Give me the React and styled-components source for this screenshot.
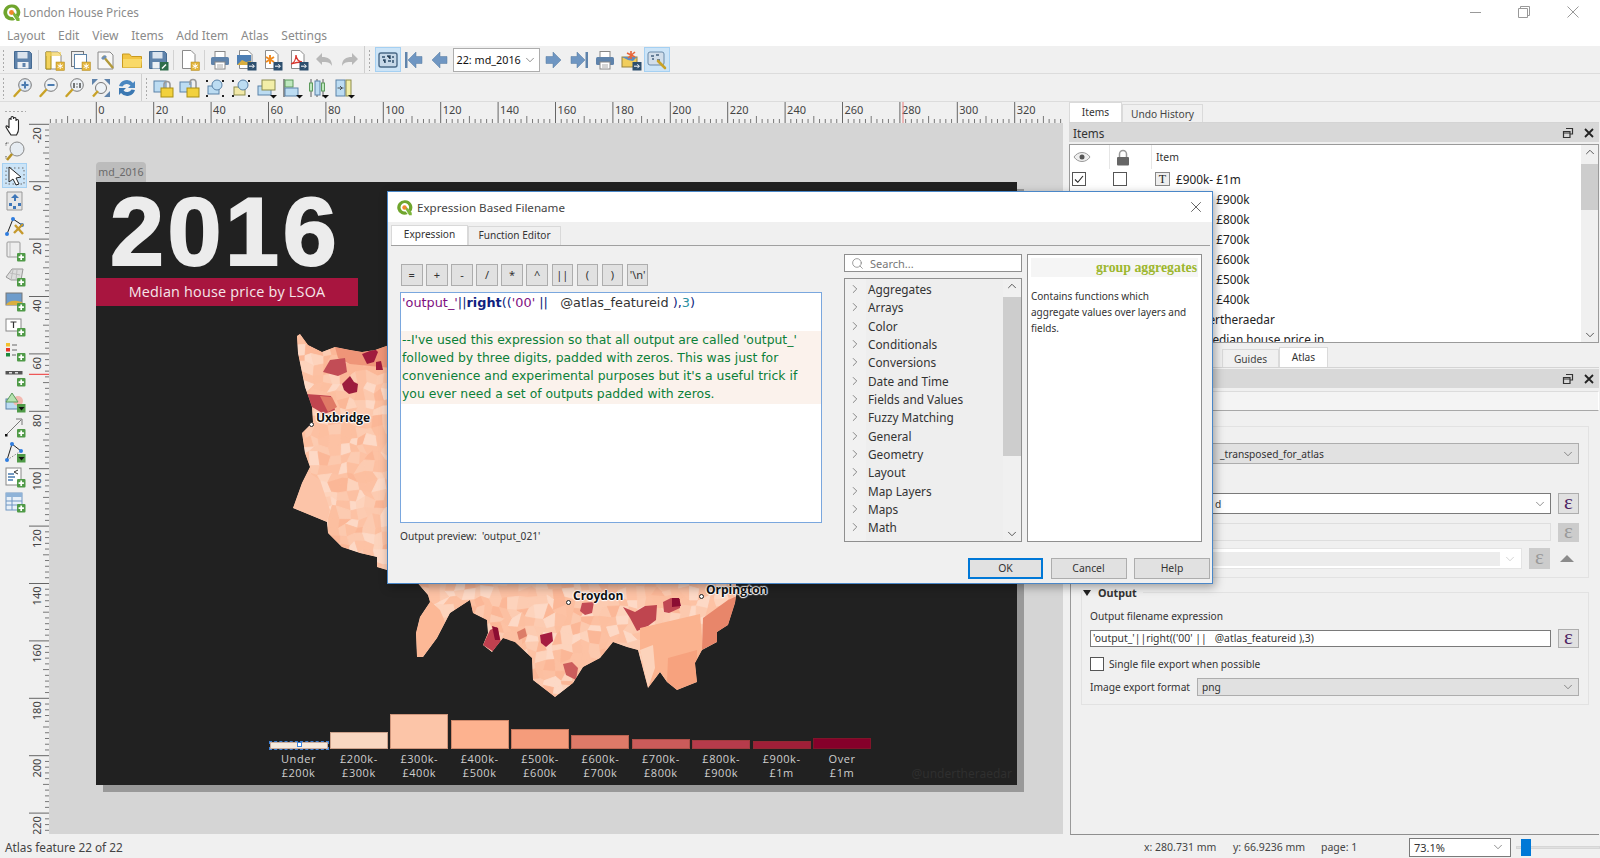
import React from 'react';
import styled, { createGlobalStyle } from 'styled-components';
import { ChevronDown, ChevronRight, ChevronUp, Search, X } from 'lucide-react';

const GlobalStyle = createGlobalStyle`
  html, body {
    margin: 0;
    width: 1600px;
    height: 858px;
    overflow: hidden;
    background: #f0f0f0;
  }
  * { box-sizing: border-box; }
`;

const Window = styled.div`
  position: relative;
  width: 1600px;
  height: 858px;
  display: flex;
  flex-direction: column;
  background: #f0f0f0;
  font-family: "Noto Sans", sans-serif;
  font-size: 12px;
  color: #222;
`;

/* title and menu */
const TitleBar = styled.div`
  height: 24px;
  background: #fff;
  display: flex;
  align-items: center;
  padding-left: 2px;
  gap: 2px;
  color: #8b8b8b;
  font-size: 11.7px;
`;
const WinControls = styled.div`
  margin-left: auto;
  margin-right: 3px;
  display: flex;
  svg { display: block; }
`;
const WinButton = styled.div`
  width: 48.5px;
  height: 24px;
  display: flex;
  align-items: center;
  justify-content: center;
`;
const MenuBar = styled.div`
  height: 22px;
  background: #fff;
  display: flex;
  align-items: center;
  gap: 12.8px;
  padding-left: 7px;
  color: #8a8a8a;
  font-size: 12px;
`;

/* toolbars */
const ToolRow = styled.div`
  height: 28px;
  display: flex;
  align-items: center;
  border-bottom: 1px solid #dcdcdc;
`;
const Handle = styled.div`
  width: ${p => p.$w || 9.5}px;
  height: 22px;
  flex: none;
  background-image: radial-gradient(#aaa 0.7px, transparent 0.9px);
  background-size: 3px 4px;
  background-position: 2px 0;
  background-repeat: repeat-y;
`;
const ToolBtn = styled.div`
  width: 26px;
  height: 25px;
  flex: none;
  display: flex;
  align-items: center;
  justify-content: center;
  background: ${p => (p.$active ? '#cce4f7' : 'transparent')};
  box-shadow: ${p => (p.$active ? 'inset 0 0 0 1px #a5d0f2' : 'none')};
  svg { display: block; }
`;
const Sep = styled.div`
  width: 5px;
  height: 20px;
  flex: none;
  display: flex;
  justify-content: center;
  &::before {
    content: "";
    width: 1px;
    background: #d2d2d2;
  }
`;
const GroupEnd = styled.div`
  width: 1px;
  height: 27px;
  margin: 0 1px;
  background: #cfcfcf;
  flex: none;
`;
const PageCombo = styled.div`
  width: 87px;
  height: 24px;
  flex: none;
  background: #fff;
  border: 1px solid #adadad;
  display: flex;
  align-items: center;
  padding-left: 3px;
  font-size: 10.8px;
  color: #111;
  justify-content: space-between;
  white-space: nowrap;
  svg { margin-right: 2px; flex: none; }
`;

/* main workspace */
const Main = styled.div`
  flex: 1;
  min-height: 0;
  display: flex;
`;
const SideTools = styled.div`
  width: 29px;
  flex: none;
  display: flex;
  flex-direction: column;
  align-items: center;
  padding-top: 8px;
`;
const SideBtn = styled(ToolBtn)`
  width: 25px;
  height: 25.1px;
`;
const SideGrip = styled.div`
  width: 22px;
  height: 3px;
  background-image: radial-gradient(#aaa 0.7px, transparent 0.9px);
  background-size: 4px 3px;
`;
const Designer = styled.div`
  width: 1034px;
  flex: none;
  display: flex;
  flex-direction: column;
  padding-bottom: 2px;
`;
const RulerH = styled.svg`
  display: block;
  flex: none;
  width: 1034px;
  height: 21px;
`;
const DesignerBody = styled.div`
  flex: 1;
  min-height: 0;
  display: flex;
`;
const RulerV = styled.svg`
  display: block;
  flex: none;
  width: 20px;
  height: 100%;
`;
const Canvas = styled.div`
  flex: 1;
  background: #d5d5d5;
  padding: 39px 0 0 47px;
  overflow: hidden;
`;
const PageTab = styled.div`
  width: 50px;
  height: 20px;
  background: #bcbcbc;
  border-radius: 4px 4px 0 0;
  color: #6a6a6a;
  font-size: 10.6px;
  line-height: 21px;
  text-align: center;
`;
const Page = styled.div`
  position: relative;
  width: 921px;
  height: 603px;
  background: #212121;
  box-shadow: 7px 7px 0 #999;
  display: flex;
  flex-direction: column;
  padding-bottom: 5px;
`;
const Year = styled.div`
  height: 96px;
  padding-left: 14px;
  font-family: "Liberation Sans", sans-serif;
  font-weight: 700;
  font-size: 97px;
  line-height: 100px;
  letter-spacing: 3.6px;
  color: #ececec;
  -webkit-text-stroke: 2px #ececec;
`;
const Banner = styled.div`
  width: 262px;
  height: 28px;
  background: #a8153f;
  color: #f6e6ea;
  font-size: 14.4px;
  line-height: 28px;
  text-align: center;
  letter-spacing: 0.2px;
  font-family: "Open Sans", sans-serif;
`;
const MapSvg = styled.svg`
  position: absolute;
  left: 0;
  top: 0;
  width: 921px;
  height: 603px;
`;
const MapLabel = styled.div`
  position: absolute;
  left: ${p => p.$x}px;
  top: ${p => p.$y}px;
  font-family: "Open Sans", sans-serif;
  font-weight: 700;
  font-size: 12px;
  line-height: 14px;
  color: #111;
  text-shadow: 0 0 2px #fff, 1px 0 1px #fff, -1px 0 1px #fff, 0 1px 1px #fff, 0 -1px 1px #fff;
`;
const Pin = styled.div`
  position: absolute;
  left: ${p => p.$x}px;
  top: ${p => p.$y}px;
  width: 5px;
  height: 5px;
  border-radius: 50%;
  background: #fff;
  border: 1px solid #222;
`;
const Watermark = styled.div`
  position: absolute;
  right: 5px;
  bottom: 3px;
  font-size: 12px;
  color: #2f2f2f;
`;
const Chart = styled.div`
  margin-top: auto;
  margin-left: 173.5px;
  display: flex;
  gap: 2.4px;
  position: relative;
`;
const ChartCol = styled.div`
  width: 58px;
  display: flex;
  flex-direction: column;
  align-items: stretch;
`;
const BarSlot = styled.div`
  height: 36px;
  display: flex;
  align-items: flex-end;
`;
const Bar = styled.div`
  width: 100%;
  position: relative;
  height: ${p => p.$h}px;
  background: ${p => p.$c};
  border: 1px solid rgba(120, 60, 40, 0.35);
  outline: ${p => (p.$selected ? '1px dashed #3f83d8' : 'none')};
  &::after {
    content: "";
    display: ${p => (p.$selected ? 'block' : 'none')};
    position: absolute;
    left: 50%;
    top: -1px;
    width: 3px;
    height: 3px;
    margin-left: -2px;
    background: #fff;
    border: 1px solid #3f83d8;
  }
`;
const BarLabel = styled.div`
  margin-top: 3px;
  text-align: center;
  color: #cfcfcf;
  font-family: "Open Sans", sans-serif;
  font-size: 11px;
  line-height: 14px;
  letter-spacing: 0.55px;
  white-space: pre-line;
`;

/* right dock */
const Dock = styled.div`
  flex: 1;
  min-width: 0;
  padding: 0 1px 1px 6px;
  display: flex;
  flex-direction: column;
`;
const DockTabs = styled.div`
  height: 21px;
  flex: none;
  display: flex;
  align-items: flex-end;
  padding-left: ${p => p.$indent || 0}px;
  border-bottom: 1px solid #d4d4d4;
  margin-top: ${p => p.$top || 0}px;
`;
const DockTab = styled.div`
  width: ${p => p.$w}px;
  height: ${p => (p.$active ? 20 : 18)}px;
  background: ${p => (p.$active ? '#fff' : '#f0f0f0')};
  border: 1px solid #dadada;
  border-bottom: none;
  font-size: 10.2px;
  line-height: 18px;
  text-align: center;
  color: ${p => (p.$active ? '#333' : '#444')};
`;
const DockHeader = styled.div`
  height: 19px;
  flex: none;
  margin-top: ${p => p.$top || 0}px;
  background: #d8d8d8;
  display: flex;
  align-items: center;
  padding: 0 4px;
  color: #333;
  font-size: 11.7px;
  gap: 9px;
  svg { display: block; }
`;
const HeaderTitle = styled.div`
  flex: 1;
`;
const ItemTree = styled.div`
  height: 199px;
  flex: none;
  margin-top: 2px;
  background: #fff;
  border: 1px solid #9a9a9a;
  display: flex;
  overflow: hidden;
`;
const ItemList = styled.div`
  flex: 1;
  min-width: 0;
`;
const ItemHead = styled.div`
  height: 24px;
  display: grid;
  grid-template-columns: 40px 42px 1fr;
`;
const HeadCell = styled.div`
  border-right: ${p => (p.$last ? 'none' : '1px solid #e6e6e6')};
  display: flex;
  align-items: center;
  padding-left: ${p => p.$pad || 0}px;
  font-size: 10.4px;
  color: #333;
`;
const ItemRow = styled.div`
  height: 20px;
  display: grid;
  grid-template-columns: 40px 42px 1fr;
  align-items: center;
`;
const CheckBox = styled.div`
  width: 14px;
  height: 14px;
  border: 1px solid #555;
  background: #fff;
  margin-left: ${p => p.$left || 0}px;
  flex: none;
  display: flex;
  align-items: center;
  justify-content: center;
`;
const ItemName = styled.div`
  display: flex;
  align-items: center;
  padding-left: 3px;
  gap: 6px;
  font-size: 11.8px;
  color: #222;
  white-space: nowrap;
`;
const TypeIcon = styled.div`
  width: 15px;
  height: 14px;
  border: 1px solid #888;
  background: #eee;
  font-family: "Liberation Serif", serif;
  font-size: 12px;
  line-height: 12px;
  text-align: center;
`;
const ScrollBar = styled.div`
  width: ${p => p.$w}px;
  flex: none;
  background: #f0f0f0;
  display: flex;
  flex-direction: column;
  align-items: center;
  justify-content: space-between;
  position: relative;
  color: #444;
  svg { display: block; }
`;
const Thumb = styled.div`
  position: absolute;
  left: 0;
  right: 0;
  top: ${p => p.$top}px;
  height: ${p => p.$h}px;
  background: #cdcdcd;
`;
const Strip = styled.div`
  height: 20px;
  flex: none;
  margin-top: 3px;
  background: #f4f4f4;
  border: 1px solid #dcdcdc;
  border-bottom: 1px solid #a8a8a8;
  border-right-color: #fff;
`;
const AtlasBody = styled.div`
  flex: 1;
  min-height: 0;
  border-left: 1px solid #9a9a9a;
  border-bottom: 1px solid #8f8f8f;
  margin-left: 1px;
  padding: 15px 10px 0 10px;
`;
const GroupBox = styled.div`
  border: 1px solid #e2e2e2;
  height: ${p => p.$h}px;
  padding: ${p => p.$pad};
  display: flex;
  flex-direction: column;
  position: relative;
`;
const OutputTitle = styled.div`
  position: absolute;
  left: 0;
  top: -8px;
  background: #f0f0f0;
  display: flex;
  align-items: center;
  gap: 7px;
  padding-right: 6px;
  font-weight: 700;
  font-size: 10.8px;
  line-height: 15px;
  color: #333;
`;
const Caret = styled.div`
  width: 0;
  height: 0;
  margin-left: 1px;
  border-left: 4.5px solid transparent;
  border-right: 4.5px solid transparent;
  border-top: 6px solid #222;
`;
const FormRow = styled.div`
  display: flex;
  align-items: center;
  gap: ${p => p.$gap || 7}px;
  margin-top: ${p => p.$top || 0}px;
  height: ${p => p.$h}px;
`;
const Combo = styled.div`
  flex: 1;
  height: 100%;
  display: flex;
  align-items: center;
  justify-content: space-between;
  padding: 0 3px 0 ${p => p.$pad || 4}px;
  background: ${p => (p.$white ? '#fff' : '#e1e1e1')};
  border: 1px solid ${p => (p.$white ? '#7a7a7a' : '#adadad')};
  font-size: 10.2px;
  color: #333;
  white-space: nowrap;
`;
const DisabledInput = styled.div`
  flex: 1;
  height: 100%;
  background: #f0f0f0;
  border: 1px solid #dedede;
`;
const DisabledCombo = styled.div`
  flex: 1;
  height: 100%;
  display: flex;
  justify-content: flex-end;
  background: #fff;
  border: 1px solid #e4e4e4;
  padding: 3px 1px 2px 0;
  div {
    flex: 1;
    background: #ececec;
  }
  svg { margin: 0 3px; }
`;
const EpsButton = styled.div`
  width: 21px;
  height: ${p => p.$h || 21}px;
  flex: none;
  background: ${p => (p.$off ? '#ccc' : '#e1e1e1')};
  border: 1px solid ${p => (p.$off ? '#ccc' : '#adadad')};
  color: ${p => (p.$off ? '#999' : '#4d1f63')};
  font-family: "Liberation Serif", serif;
  font-size: 21px;
  line-height: ${p => (p.$h || 21) - 5}px;
  text-align: center;
`;
const UpTriangle = styled.div`
  width: 0;
  height: 0;
  margin: 0 5px 0 3px;
  border-left: 7px solid transparent;
  border-right: 7px solid transparent;
  border-bottom: 7px solid #8b8b8b;
`;
const FieldLabel = styled.div`
  font-size: 10.2px;
  line-height: 16px;
  color: #333;
  white-space: nowrap;
`;
const TextInput = styled.div`
  flex: 1;
  height: 17px;
  background: #fff;
  border: 1px solid #7a7a7a;
  padding-left: 2px;
  font-size: 10.4px;
  line-height: 15px;
  color: #333;
  white-space: pre;
`;
const GroupGap = styled.div`
  height: 14px;
  flex: none;
`;

/* status bar */
const StatusBar = styled.div`
  height: 22px;
  display: flex;
  align-items: center;
  padding-left: 5px;
  color: #333;
`;
const StatusText = styled.div`
  width: ${p => p.$w}px;
  flex: none;
  color: #444;
  font-size: ${p => p.$size || 10.5}px;
  white-space: nowrap;
`;
const ZoomCombo = styled.div`
  width: 102px;
  height: 19px;
  background: #fff;
  border: 1px solid #7a7a7a;
  display: flex;
  align-items: center;
  justify-content: space-between;
  padding: 0 5px 0 4px;
  font-size: 11px;
`;
const SliderTrack = styled.div`
  flex: 1;
  margin-left: 5px;
  height: 3px;
  position: relative;
  background: #e0e0e0;
  border: 1px solid #d6d6d6;
`;
const SliderHandle = styled.div`
  position: absolute;
  left: 4px;
  top: -8px;
  width: 10px;
  height: 17px;
  background: #0078d7;
`;

/* dialog */
const Dialog = styled.div`
  position: absolute;
  left: 387px;
  top: 191px;
  width: 826px;
  height: 393px;
  background: #f0f0f0;
  border: 1px solid #4a87c8;
  box-shadow: 2px 3px 9px rgba(0, 0, 0, 0.35);
  display: flex;
  flex-direction: column;
`;
const DialogTitle = styled.div`
  height: 30px;
  flex: none;
  background: #fff;
  display: flex;
  align-items: center;
  padding: 0 7px 0 8px;
  gap: 4px;
  font-size: 11.6px;
  color: #444;
`;
const DialogClose = styled.div`
  margin-left: auto;
  color: #333;
  svg { display: block; }
`;
const DialogTabs = styled.div`
  height: 21px;
  flex: none;
  margin: 3px 2px 0 3px;
  display: flex;
  align-items: flex-end;
  border-bottom: 1px solid #a0a0a0;
`;
const DialogTab = styled.div`
  width: ${p => p.$w}px;
  height: ${p => (p.$active ? 20 : 19)}px;
  background: ${p => (p.$active ? '#fff' : '#f0f0f0')};
  border: 1px solid #d9d9d9;
  border-bottom: none;
  font-size: 10.1px;
  line-height: 17px;
  text-align: center;
  color: #333;
`;
const DialogBody = styled.div`
  flex: none;
  margin-top: 8px;
  padding-left: 12px;
  display: flex;
  height: 288px;
`;
const EditorCol = styled.div`
  width: 422px;
  flex: none;
  margin-right: 22px;
  padding-top: 10px;
`;
const OpButtons = styled.div`
  display: flex;
  gap: 3.6px;
  padding-left: 1px;
  margin-bottom: 6px;
`;
const OpButton = styled.div`
  width: 21.5px;
  height: 22px;
  flex: none;
  background: #e1e1e1;
  border: 1px solid #adadad;
  text-align: center;
  font-size: 11px;
  line-height: 19px;
  color: #333;
`;
const Editor = styled.div`
  height: 231px;
  background: #fff;
  border: 1px solid #7aa7de;
  padding-top: 1px;
  font-family: "DejaVu Sans", sans-serif;
  font-size: 12.4px;
  line-height: 18.3px;
  white-space: pre;
`;
const CodeLine = styled.div`
  padding-left: 1px;
  height: 18.3px;
  font-size: ${p => p.$size || 12.4}px;
  background: ${p => (p.$comment ? '#fbf2ec' : 'transparent')};
  color: ${p => (p.$comment ? '#0b7f38' : '#333')};
`;
const Str = styled.span`
  color: #7f0f7f;
`;
const Fn = styled.span`
  color: #101f80;
  font-weight: 700;
`;
const Op = styled.span`
  color: #101f80;
`;
const Num = styled.span`
  color: #2a8f9f;
`;
const Preview = styled.div`
  margin-top: 6px;
  font-size: 10.2px;
  color: #333;
  white-space: pre;
`;
const MiddleCol = styled.div`
  width: 178px;
  flex: none;
  margin-right: 5px;
  display: flex;
  flex-direction: column;
  gap: 6px;
`;
const SearchBox = styled.div`
  height: 18px;
  flex: none;
  background: #fff;
  border: 1px solid #8f8f8f;
  display: flex;
  align-items: center;
  padding-left: 6px;
  gap: 6px;
  font-size: 11px;
  color: #777;
  svg { display: block; }
`;
const FuncTree = styled.div`
  flex: 1;
  min-height: 0;
  border: 1px solid #8f8f8f;
  display: flex;
  overflow: hidden;
`;
const FuncList = styled.div`
  flex: 1;
  background: #eeeeee;
  padding-top: 1px;
  background-image: linear-gradient(#f1f1f1, #f1f1f1);
  background-size: 21px 100%;
  background-repeat: no-repeat;
`;
const FuncRow = styled.div`
  height: 18.33px;
  display: flex;
  align-items: center;
  padding-left: 3px;
  gap: 6px;
  font-size: 11.8px;
  color: #333;
  svg { display: block; color: #777; flex: none; }
`;
const HelpBox = styled.div`
  width: 175px;
  flex: none;
  background: #fff;
  border: 1px solid #8f8f8f;
  padding: 3px;
`;
const HelpHead = styled.div`
  height: 19px;
  background: #f5f5f5;
  text-align: right;
  color: #9db72e;
  font-family: "Liberation Serif", serif;
  font-weight: 700;
  font-size: 13.8px;
  line-height: 20px;
  padding-right: 1px;
`;
const HelpText = styled.div`
  margin-top: 11px;
  font-size: 10px;
  line-height: 16px;
  color: #333;
`;
const DialogFooter = styled.div`
  margin-top: 16px;
  padding-right: 2px;
  display: flex;
  justify-content: flex-end;
  gap: 7.5px;
`;
const DlgButton = styled.div`
  width: ${p => p.$w}px;
  height: 21px;
  background: #e1e1e1;
  border: ${p => (p.$primary ? '2px solid #0078d7' : '1px solid #adadad')};
  text-align: center;
  font-size: 10.4px;
  line-height: ${p => (p.$primary ? 17 : 19)}px;
  color: #333;
`;

/* icon drawings */
const plusBadge = (
  <g>
    <rect x="13" y="13" width="8.5" height="8.5" rx="1" fill="#4f9a47" />
    <path d="M17.2 14.6v5.3M14.6 17.2h5.3" stroke="#fff" strokeWidth="1.7" />
  </g>
);
const menuBadge = (
  <g>
    <rect x="13" y="13" width="8.5" height="8.5" fill="#4f9a47" />
    <path d="M14.5 16h6l-3 3.5z" fill="#111" />
  </g>
);
const starBadge = (
  <g>
    <rect x="13" y="13" width="8.5" height="8.5" fill="#e2b43a" stroke="#b08820" strokeWidth="0.5" />
    <path d="M17.2 14.4v5.6M14.6 15.8l5.2 2.8M19.8 15.8l-5.2 2.8" stroke="#fff" strokeWidth="1" />
  </g>
);
const exportBadge = (
  <g>
    <rect x="12.5" y="13" width="9" height="8.5" fill="#2d4f6e" />
    <path d="M14 17.2h5M17.4 15.2l2 2-2 2" stroke="#fff" strokeWidth="1" fill="none" />
  </g>
);
const dropCaret = <path d="M14 18h7l-3.5 3.5z" fill="#111" />;
const doc = <path d="M4.5 1.5h8.5l4 4v14h-12.5z" fill="#fff" stroke="#8a8a8a" />;
const magHandle = <path d="M8 13l-5.5 6" stroke="#c9a227" strokeWidth="2.4" strokeLinecap="round" />;
const lockBody = <rect x="9" y="11" width="12" height="9" fill="#f2d13c" stroke="#a98e14" />;
const corners = <path d="M2 3h2v2H2zM18 3h2v2h-2zM2 18h2v2H2zM18 18h2v2h-2z" fill="#222" />;
const blueSq = (x, y, w, h) => <rect x={x} y={y} width={w} height={h} fill="#bcdcf2" stroke="#5a82a8" />;

const ICONS = {
  save: <><path d="M2.5 2.5h15l2 2v15h-17z" fill="#5f83ab" stroke="#456a92" /><rect x="5.5" y="3" width="10" height="6.5" fill="#dbe4ee" /><rect x="5.5" y="13" width="11" height="6.5" fill="#eef1f5" /><rect x="10.5" y="14" width="3" height="4" fill="#5f83ab" /></>,
  saveAs: <><path d="M2.5 2.5h15l2 2v15h-17z" fill="#5f83ab" stroke="#456a92" /><rect x="5.5" y="3" width="10" height="6.5" fill="#dbe4ee" /><rect x="5.5" y="13" width="7" height="6.5" fill="#eef1f5" /><rect x="13" y="13" width="8.5" height="8.5" fill="#2f6d4a" /><path d="M15 19.5l4-4" stroke="#fff" strokeWidth="1.4" /></>,
  newLayout: <><path d="M3 3h12l3 3v14H3z" fill="#fff" stroke="#8a8a8a" /><path d="M3 3h5v17H3z" fill="#f2d25c" stroke="#a98e14" /><path d="M3 3h15v4H3z" fill="#f2d25c" opacity="0.7" />{starBadge}</>,
  dupLayout: <><rect x="2.5" y="2.5" width="12" height="15" fill="#eee" stroke="#777" /><rect x="5.5" y="5.5" width="12" height="14" fill="#fff" stroke="#5a82a8" />{starBadge}</>,
  layoutMgr: <><path d="M3 3h12l3 3v14H3z" fill="#f7f7f7" stroke="#8a8a8a" /><path d="M8 7l10 12" stroke="#b39a3a" strokeWidth="2.4" /><path d="M6 9l4-3 2 2-4 3z" fill="#6f90b5" /></>,
  open: <><path d="M1.5 5h7l2 2.5h10v11h-19z" fill="#f3c544" stroke="#c99a1e" /><path d="M2 10h19l-1 8.5H2z" fill="#f9d968" /></>,
  newDoc: <>{doc}{starBadge}</>,
  print: <><rect x="6" y="2.5" width="10" height="6" fill="#fff" stroke="#888" /><rect x="2" y="8" width="18" height="8" rx="1.5" fill="#5f83ab" /><rect x="6" y="13" width="10" height="7" fill="#fff" stroke="#888" /><path d="M8 16h6M8 18h6" stroke="#aaa" /></>,
  exportImg: <>{doc}<rect x="2" y="6" width="14" height="10" fill="#4d7fb5" /><path d="M2 16l5-5 4 2 5-1v4z" fill="#d9ae3f" />{exportBadge}</>,
  exportSvg: <>{doc}<path d="M9 6v9M5 8l8 5M13 8l-8 5" stroke="#f08a1e" strokeWidth="2" />{exportBadge}</>,
  exportPdf: <>{doc}<path d="M4 15c3-1 5-5 5-9 0 4 3 7 6 7-3 0-8 1-11 2z" fill="none" stroke="#d8342c" strokeWidth="1.3" />{exportBadge}</>,
  undo: <path d="M3 10l6-6v4c6 0 10 2 10 9-2-4-5-4-10-4v3z" fill="#b8b8b8" />,
  redo: <path d="M19 10l-6-6v4c-6 0-10 2-10 9 2-4 5-4 10-4v3z" fill="#b8b8b8" />,
  atlasPreview: <><rect x="2" y="4" width="18" height="14" rx="2" fill="#c6d8e8" stroke="#4a6a88" strokeWidth="1.4" /><path d="M5 8h3M10 7h3v3M15 8h2M6 11h2v3M11 12h3M16 11v3" stroke="#31506e" strokeWidth="1.5" /></>,
  first: <><rect x="2" y="3" width="2.5" height="16" fill="#5f83ab" /><path d="M5 11l8-8v4.5h6v7h-6V19z" fill="#6f96c2" stroke="#54789f" strokeWidth="0.5" /></>,
  prev: <path d="M3 11l8-8v4.5h7v7h-7V19z" fill="#6f96c2" stroke="#54789f" strokeWidth="0.5" />,
  next: <path d="M19 11l-8-8v4.5H4v7h7V19z" fill="#6f96c2" stroke="#54789f" strokeWidth="0.5" />,
  last: <><rect x="17.5" y="3" width="2.5" height="16" fill="#5f83ab" /><path d="M17 11l-8-8v4.5H3v7h6V19z" fill="#6f96c2" stroke="#54789f" strokeWidth="0.5" /></>,
  atlasExport: <><rect x="2" y="8" width="15" height="10" fill="#f1cd5c" stroke="#99813a" /><path d="M2 8h15l-4 4-5-1z" fill="#5d8ec0" /><path d="M11 2v8M7 4l8 4M15 3l-7 6" stroke="#e8663a" strokeWidth="1.6" />{exportBadge}</>,
  atlasSettings: <><rect x="2" y="3" width="16" height="13" rx="2" fill="#d2deea" stroke="#6a8aa8" /><path d="M5 7h3M10 6h3M6 10h2M11 11h3" stroke="#45627f" strokeWidth="1.4" /><path d="M12 12l7 7" stroke="#c9a227" strokeWidth="2.6" strokeLinecap="round" /></>,
  zoomIn: <><circle cx="13" cy="8" r="6.3" fill="#dfe9f3" stroke="#777" /><path d="M13 4.5v7M9.5 8h7" stroke="#4a7bb0" strokeWidth="2" />{magHandle}</>,
  zoomOut: <><circle cx="13" cy="8" r="6.3" fill="#eef2f6" stroke="#777" /><path d="M9.5 8h7" stroke="#4a7bb0" strokeWidth="2" />{magHandle}</>,
  zoomOne: <><circle cx="13" cy="8" r="6.3" fill="#eef2f6" stroke="#777" /><path d="M10 6v5M13 6.5v1M13 9.5v1M16 6v5" stroke="#333" strokeWidth="1.3" />{magHandle}</>,
  zoomFull: <><circle cx="11" cy="11" r="5.5" fill="#eef2f6" stroke="#777" /><path d="M2 8V2h6zM20 8V2h-6zM20 14v6h-6z" fill="#5f83ab" /><path d="M8 14l-5 5.5" stroke="#c9a227" strokeWidth="2.4" /></>,
  refresh: <><path d="M3 9a8 8 0 0 1 14-3l2-2v7h-7l2.5-2.5a5 5 0 0 0-8 1z" fill="#4a87c0" /><path d="M19 13a8 8 0 0 1-14 3l-2 2v-7h7l-2.5 2.5a5 5 0 0 0 8-1z" fill="#3b78b2" /></>,
  lock: <>{blueSq(2, 4, 12, 11)}<path d="M12 11V7.5a3 3 0 0 1 6 0V11" fill="none" stroke="#999" strokeWidth="1.6" />{lockBody}</>,
  unlock: <>{blueSq(2, 5, 11, 10)}<path d="M12 8V5.5a3 3 0 0 1 6 0V11" fill="none" stroke="#999" strokeWidth="1.6" />{lockBody}</>,
  group: <>{blueSq(4, 9, 11, 8)}<circle cx="13" cy="8" r="5" fill="#bcdcf2" stroke="#5a82a8" />{corners}</>,
  ungroup: <><rect x="4" y="10" width="11" height="8" fill="#f2e9a8" stroke="#8c8c4c" /><circle cx="13" cy="8" r="5" fill="#bcdcf2" stroke="#5a82a8" />{corners}</>,
  raise: <>{blueSq(2, 9, 13, 9)}<rect x="6" y="3" width="13" height="10" fill="#f2eea8" stroke="#8c8c4c" />{dropCaret}</>,
  align: <><path d="M2 2v18" stroke="#333" /><rect x="3" y="3" width="8" height="7" fill="#bfe8bf" stroke="#5c9a5c" />{blueSq(3, 11, 13, 8)}{dropCaret}</>,
  distribute: <><path d="M3 2v18M9 2v18M15 2v18" stroke="#333" strokeWidth="0.8" /><rect x="1.5" y="6" width="3" height="8" fill="#bfe8bf" stroke="#5c9a5c" />{blueSq(7, 4, 5, 14)}<rect x="13.5" y="6" width="3" height="8" fill="#bfe8bf" stroke="#5c9a5c" />{dropCaret}</>,
  resize: <>{blueSq(2, 3, 9, 16)}<rect x="12" y="3" width="5" height="16" fill="#f2eea8" stroke="#8c8c4c" /><path d="M3.5 11h6M6 9l2 2-2 2" stroke="#333" fill="none" strokeWidth="0.8" />{dropCaret}</>,
  hand: <path d="M7 20c-2-3-4-6-5-8 0-2 2-1 3 1V5c0-2 2-2 2 0V3c0-2 2.5-2 2.5 0v1c0-2 2.5-2 2.5 0v2c0-2 2.5-2 2.5 0v8c0 3-1 4-2 6z" fill="#fff" stroke="#222" strokeWidth="1.1" />,
  zoomTool: <><circle cx="13" cy="9" r="7" fill="#e6ecf2" stroke="#888" /><path d="M2 3h3M2 3v3M2 16v3" stroke="#555" strokeDasharray="1.5 1" /><path d="M8 14l-5 6" stroke="#b59123" strokeWidth="2.6" /></>,
  select: <><path d="M2 3h18v16H2z" fill="none" stroke="#6a6a6a" strokeDasharray="1.5 2.5" /><path d="M5 2l0 15 4-3 3 6 3-1-3-6 5-1z" fill="#fff" stroke="#222" /></>,
  moveContent: <><path d="M3 2h15v18H3z" fill="#e6e6e6" stroke="#999" /><path d="M11 4l4 4h-3v3h-2V8H7z" fill="#3f77b8" /><path d="M5 13h3v3H5zM14 13h3v3h-3zM9 16h3v3H9z" fill="#3f77b8" /></>,
  editNodes: <><path d="M3 19L9 4l9 6" fill="none" stroke="#222" /><circle cx="3" cy="19" r="2" fill="#2f7de0" /><circle cx="9" cy="4" r="2" fill="#2f7de0" /><circle cx="18" cy="10" r="2" fill="#2f7de0" /><path d="M10 18l9-9M11 10l8 9" stroke="#c69a2e" strokeWidth="2.4" /></>,
  addMap: <><rect x="3" y="2" width="13" height="15" rx="1" fill="#eee" stroke="#999" /><path d="M6 2v15" stroke="#bbb" />{plusBadge}</>,
  add3d: <><path d="M2 12l6-8h11l-2 11H7z" fill="#ddd" stroke="#999" /><path d="M6 8l10 2M9 5l-2 10M13 5l-1 10" stroke="#bbb" />{plusBadge}</>,
  addPicture: <><rect x="2" y="3" width="16" height="12" fill="#6e9ccb" stroke="#777" /><path d="M2 15c3-5 8-5 16-3v3z" fill="#d9ae3f" />{plusBadge}</>,
  addLabel: <><rect x="2" y="4" width="15" height="12" fill="#fff" stroke="#888" /><path d="M6.5 7h6M9.5 7v6" stroke="#333" strokeWidth="1.2" />{plusBadge}</>,
  addLegend: <><rect x="2" y="3" width="4" height="3.5" fill="#f2c12e" /><rect x="2" y="8" width="4" height="3.5" fill="#e8352b" /><rect x="2" y="13" width="4" height="3.5" fill="#1d8a3d" /><path d="M8 5h5M8 10h5M8 15h4" stroke="#666" strokeWidth="1.2" />{plusBadge}</>,
  addScale: <><rect x="1.5" y="6" width="17" height="3.5" fill="#555" /><path d="M5 7.7h3M11 7.7h3" stroke="#ddd" strokeWidth="1.4" />{plusBadge}</>,
  addShape: <><rect x="2" y="8" width="12" height="10" fill="#bcdcf2" stroke="#5a82a8" /><circle cx="14" cy="10" r="5" fill="#f3b9b0" /><path d="M8 2l6 9H2z" fill="#b6e3b0" stroke="#5c9a5c" />{menuBadge}</>,
  addArrow: <><path d="M2 19L17 4" stroke="#777" /><path d="M12 3h6v6" fill="none" stroke="#777" /><rect x="1" y="18" width="2.5" height="2.5" fill="#111" />{plusBadge}</>,
  addNodes: <><path d="M3 19L8 3l9 7" fill="none" stroke="#222" /><path d="M3 19l14-9" stroke="#888" strokeDasharray="1.5 1.5" /><circle cx="3" cy="19" r="2" fill="#2f7de0" /><circle cx="8" cy="3" r="2" fill="#2f7de0" /><circle cx="17" cy="10" r="2" fill="#2f7de0" />{menuBadge}</>,
  addHtml: <><rect x="2" y="2" width="15" height="17" fill="#fff" stroke="#888" /><path d="M4 8h6M4 11h7M4 14h5" stroke="#4a7bb0" strokeWidth="1.3" /><path d="M10 6l4-2M10 6l4 2" stroke="#333" />{plusBadge}</>,
  addTable: <><rect x="2" y="2" width="16" height="17" fill="#e8f0f8" stroke="#6f96c2" /><rect x="2" y="2" width="16" height="4" fill="#8fb3d8" /><path d="M2 10h16M2 14h16M8 6v13" stroke="#6f96c2" />{plusBadge}</>,
};

const Icon = ({ name, size = 22 }) => (
  <svg width={size} height={size} viewBox="0 0 22 22">{ICONS[name]}</svg>
);

const QLogo = ({ size }) => (
  <svg width={size} height={size} viewBox="0 0 20 20">
    <path d="M10 1.5a8.5 8.5 0 1 0 3.8 16.1l-2.6-2.9a5 5 0 1 1 3.4-2.3l2.7 2.9A8.5 8.5 0 0 0 10 1.5z" fill="#6fa52d" />
    <path d="M9.5 9.5h3l6 6.8V19h-3z" fill="#7cb53a" />
    <circle cx="10" cy="10" r="2.6" fill="#ee8a2b" />
  </svg>
);

const ToolItems = ({ names, Btn = ToolBtn, activeSet = [] }) =>
  names.map(n => (
    <Btn key={n} $active={activeSet.includes(n)}><Icon name={n} /></Btn>
  ));

/* rulers */
const MM = 2.87;
const X0 = 96.3;
const Y0 = 181.7;

const HorizontalRuler = () => {
  const ticks = [];
  for (let mm = -16; mm <= 336; mm += 2) {
    const x = X0 + mm * MM;
    if (x < 49 || x > 1063) continue;
    const major = mm % 20 === 0;
    const mid = mm % 10 === 0;
    ticks.push(
      <line key={mm} x1={x} x2={x} y1={major ? 102 : mid ? 116 : 119} y2={123} stroke={major ? '#666' : '#777'} strokeWidth="1" />
    );
    if (major && mm >= 0) {
      ticks.push(
        <text key={`l${mm}`} x={x + 2} y={114} fontSize="11" fill="#444" fontFamily="Noto Sans, sans-serif">{mm}</text>
      );
    }
  }
  return (
    <RulerH viewBox="29 102 1034 21">
      {ticks}
      <line x1={903} x2={903} y1={102} y2={123} stroke="#ea7a7a" />
    </RulerH>
  );
};

const VerticalRuler = () => {
  const ticks = [];
  for (let mm = -20; mm <= 226; mm += 2) {
    const y = Y0 + mm * MM;
    if (y > 835) continue;
    const major = mm % 20 === 0;
    const mid = mm % 10 === 0;
    ticks.push(
      <line key={mm} y1={y} y2={y} x1={major ? 29 : mid ? 43 : 45} x2={49} stroke={major ? '#666' : '#777'} strokeWidth="1" />
    );
    if (major) {
      ticks.push(
        <text key={`l${mm}`} x={41} y={y + 3} fontSize="11" fill="#444" fontFamily="Noto Sans, sans-serif" textAnchor="end" transform={`rotate(-90 41 ${y + 3})`}>{mm}</text>
      );
    }
  }
  return (
    <RulerV viewBox="29 123 20 711" preserveAspectRatio="xMinYMin slice">
      {ticks}
      <line x1={29} x2={49} y1={374.3} y2={374.3} stroke="#e33" />
    </RulerV>
  );
};

/* choropleth map: irregular grid cells clipped to the borough outlines */
const WEST = 'M297 336L300 334L308 345L322 352L335 347L350 350L362 352L375 350L392 344L392 572L387 570L377 567L377 557L360 553L342 547L328 533L327 522L293 508L302 483L310 467L305 453L302 433L313 422L312 407L305 387L298 353Z';
const SOUTH = 'M415 580L428 595L430 602L420 617L416 633L417 657L423 657L437 638L450 613L470 600L473 613L487 620L488 633L483 645L492 652L503 638L515 642L532 658L533 680L555 697L573 683L583 667L600 658L613 642L627 647L638 650L648 688L660 672L667 682L677 690L697 682L695 663L702 650L717 642L717 632L728 625L735 603L737 590L735 580Z';

const makeCells = () => {
  let seed = 71;
  const rnd = () => {
    seed = (seed * 16807) % 2147483647;
    return seed / 2147483647;
  };
  const step = 9;
  const cols = 53;
  const rows = 43;
  const pts = [];
  for (let r = 0; r <= rows; r++) {
    pts.push([]);
    for (let c = 0; c <= cols; c++) {
      pts[r].push([285 + c * step + (rnd() - 0.5) * 7, 328 + r * step + (rnd() - 0.5) * 7]);
    }
  }
  const palette = ['#fdd3bc', '#fcc9ae', '#fdc2a4', '#fccbb1', '#fbb797', '#fcc0a2', '#fdd9c6', '#fcbfa0'];
  const cells = [];
  for (let r = 0; r < rows; r++) {
    for (let c = 0; c < cols; c++) {
      const x = 285 + c * step;
      const y = 328 + r * step;
      if (x > 395 && y < 570) continue;
      let idx = Math.floor(rnd() * palette.length);
      if (y < 372 && rnd() < 0.35) idx = 4;
      const ps = [pts[r][c], pts[r][c + 1], pts[r + 1][c + 1], pts[r + 1][c]];
      cells.push({ d: `M${ps.map(p => `${p[0].toFixed(1)} ${p[1].toFixed(1)}`).join('L')}Z`, fill: palette[idx] });
    }
  }
  return cells;
};
const CELLS = makeCells();

const PATCHES = [
  ['M335 347L392 344L392 368L370 366L350 364L338 358Z', '#ef9578'],
  ['M293 508L305 470L320 480L330 510L327 522Z', '#fcc4a8'],
  ['M323 372L330 360L345 358L347 372L338 376Z', '#c24d56'],
  ['M342 384L350 376L354 382L358 384L357 392L349 394L344 390Z', '#9d1f3d'],
  ['M362 354L375 349L378 352L374 362L367 364Z', '#a01c3d'],
  ['M376 362L381 361L383 370L376 370Z', '#a01c3d'],
  ['M306 394L320 395L331 396L335 410L324 414L312 407Z', '#c0444f'],
  ['M320 396L332 397L337 407L328 412Z', '#e07a66'],
  ['M415 584L428 595L430 602L420 617L416 633L417 657L423 657L437 638L445 622L440 610L425 596Z', '#fcb896'],
  ['M582 603L594 602L592 613L585 615L580 611Z', '#c44b55'],
  ['M623 607L635 612L645 606L657 605L656 620L648 626L637 631L630 618Z', '#bf4550'],
  ['M663 602L671 598L680 599L680 608L669 613L664 612Z', '#c04652'],
  ['M672 598L679 598L681 606L672 607Z', '#8b0a30'],
  ['M540 635L552 632L553 641L546 647L541 643Z', '#a51c40'],
  ['M490 630L497 627L501 642L494 652L483 645Z', '#c04050'],
  ['M492 626L498 628L500 640L495 640Z', '#8b0a30'],
  ['M517 632L525 628L527 636L519 640Z', '#dc7d67'],
  ['M563 664L572 662L578 668L576 680L566 675Z', '#cc5d5c'],
  ['M640 628L700 614L703 648L696 663L697 682L677 690L667 682L660 672L648 688L640 650Z', '#fbb38f'],
  ['M668 658L697 650L697 682L677 690L667 682Z', '#f7a27e'],
  ['M703 618L728 600L737 596L730 625L717 632L717 642L702 650Z', '#e8866b'],
  ['M640 650L653 645L655 668L648 688Z', '#fcd3bb'],
];

const LondonMap = () => (
  <MapSvg viewBox="96 182 921 603">
    <defs>
      <clipPath id="boroughs">
        <path d={WEST} />
        <path d={SOUTH} />
      </clipPath>
      <filter id="soften" x="-5%" y="-5%" width="110%" height="110%">
        <feGaussianBlur stdDeviation="0.55" />
      </filter>
    </defs>
    <g clipPath="url(#boroughs)">
      <path d={WEST} fill="#fcc4a8" />
      <path d={SOUTH} fill="#fcc4a8" />
      <g filter="url(#soften)">
        {CELLS.map((c, i) => (
          <path key={i} d={c.d} fill={c.fill} stroke={c.fill} strokeWidth="0.8" />
        ))}
        {PATCHES.map(([d, fill], i) => <path key={i} d={d} fill={fill} />)}
      </g>
    </g>
  </MapSvg>
);

const BARS = [
  { h: 7, c: '#f6e9dc', label: 'Under\n£200k', selected: true },
  { h: 17.5, c: '#f8d7c1', label: '£200k-\n£300k' },
  { h: 35, c: '#fcc5a8', label: '£300k-\n£400k' },
  { h: 29, c: '#fdb28f', label: '£400k-\n£500k' },
  { h: 20, c: '#f59c7b', label: '£500k-\n£600k' },
  { h: 14.5, c: '#de7a68', label: '£600k-\n£700k' },
  { h: 10, c: '#cb5b5a', label: '£700k-\n£800k' },
  { h: 9, c: '#b63b4b', label: '£800k-\n£900k' },
  { h: 8.5, c: '#a01f38', label: '£900k-\n£1m' },
  { h: 11, c: '#85002a', label: 'Over\n£1m' },
];

const ITEMS = ['£900k- £1m', '£800k- £900k', '£700k- £800k', '£600k- £700k', '£500k- £600k', '£400k- £500k', '£300k- £400k', '@undertheraedar', 'Text Median house price in...'];
const FUNCTIONS = ['Aggregates', 'Arrays', 'Color', 'Conditionals', 'Conversions', 'Date and Time', 'Fields and Values', 'Fuzzy Matching', 'General', 'Geometry', 'Layout', 'Map Layers', 'Maps', 'Math', 'Operators'];
const OPS = ['=', '+', '-', '/', '*', '^', '||', '(', ')', "'\\n'"];
const SIDE_TOOLS = ['hand', 'zoomTool', 'select', 'moveContent', 'editNodes', 'addMap', 'add3d', 'addPicture', 'addLabel', 'addLegend', 'addScale', 'addShape', 'addArrow', 'addNodes', 'addHtml', 'addTable'];

const Check = () => (
  <svg width="12" height="12" viewBox="0 0 12 12"><path d="M2 6.5l2.8 2.8L10 3" fill="none" stroke="#222" strokeWidth="1.1" /></svg>
);
const FloatIcon = () => (
  <svg width="12" height="12" viewBox="0 0 12 12"><path d="M4 1.5h6.5V7H8M1.5 4.5H8V10.5H1.5zM1.5 4.5v1.5H8" fill="none" stroke="#333" strokeWidth="1.2" /></svg>
);
const CloseIcon = () => (
  <svg width="12" height="12" viewBox="0 0 12 12"><path d="M2 2l8 8M10 2l-8 8" stroke="#222" strokeWidth="1.8" /></svg>
);
const Chev = ({ color = '#555' }) => <ChevronDown size={14} strokeWidth={1.1} color={color} />;

export default function App() {
  return (
    <Window>
      <GlobalStyle />
      <TitleBar>
        <QLogo size={19} />
        <span>London House Prices</span>
        <WinControls>
          <WinButton><svg width="11" height="11" viewBox="0 0 11 11"><path d="M0 5.5h11" stroke="#999" /></svg></WinButton>
          <WinButton><svg width="12" height="12" viewBox="0 0 12 12"><path d="M.5 2.5h9v9h-9zM2.5 2.5v-2h9v9h-2" fill="none" stroke="#999" /></svg></WinButton>
          <WinButton><svg width="12" height="12" viewBox="0 0 12 12"><path d="M.5.5l11 11M11.5.5l-11 11" stroke="#999" /></svg></WinButton>
        </WinControls>
      </TitleBar>
      <MenuBar>
        {['Layout', 'Edit', 'View', 'Items', 'Add Item', 'Atlas', 'Settings'].map(m => <span key={m}>{m}</span>)}
      </MenuBar>

      <ToolRow>
        <Handle />
        <ToolItems names={['save']} />
        <Sep />
        <ToolItems names={['newLayout', 'dupLayout', 'layoutMgr', 'open', 'saveAs']} />
        <Sep />
        <ToolItems names={['newDoc']} />
        <Sep />
        <ToolItems names={['print', 'exportImg', 'exportSvg', 'exportPdf', 'undo', 'redo']} />
        <GroupEnd />
        <Handle $w={9} />
        <ToolItems names={['atlasPreview']} activeSet={['atlasPreview']} />
        <ToolItems names={['first', 'prev']} />
        <PageCombo>22: md_2016<Chev /></PageCombo>
        <ToolItems names={['next', 'last', 'print', 'atlasExport', 'atlasSettings']} activeSet={['atlasSettings']} />
      </ToolRow>
      <ToolRow>
        <Handle />
        <ToolItems names={['zoomIn', 'zoomOut', 'zoomOne', 'zoomFull', 'refresh']} />
        <GroupEnd />
        <Handle $w={7} />
        <ToolItems names={['lock', 'unlock', 'group', 'ungroup', 'raise', 'align', 'distribute', 'resize']} />
      </ToolRow>

      <Main>
        <SideTools>
          <SideGrip />
          <ToolItems names={SIDE_TOOLS} Btn={SideBtn} activeSet={['select']} />
        </SideTools>
        <Designer>
          <HorizontalRuler />
          <DesignerBody>
            <VerticalRuler />
            <Canvas>
              <PageTab>md_2016</PageTab>
              <Page>
                <LondonMap />
                <Year>2016</Year>
                <Banner>Median house price by LSOA</Banner>
                <Pin $x={213} $y={240} />
                <MapLabel $x={220} $y={229}>Uxbridge</MapLabel>
                <Pin $x={470} $y={418} />
                <MapLabel $x={477} $y={407}>Croydon</MapLabel>
                <Pin $x={603} $y={412} />
                <MapLabel $x={610} $y={401}>Orpington</MapLabel>
                <Chart>
                  {BARS.map(b => (
                    <ChartCol key={b.label}>
                      <BarSlot><Bar $h={b.h} $c={b.c} $selected={b.selected} /></BarSlot>
                      <BarLabel>{b.label}</BarLabel>
                    </ChartCol>
                  ))}
                </Chart>
                <Watermark>@undertheraedar</Watermark>
              </Page>
            </Canvas>
          </DesignerBody>
        </Designer>

        <Dock>
          <DockTabs>
            <DockTab $w={53} $active>Items</DockTab>
            <DockTab $w={81}>Undo History</DockTab>
          </DockTabs>
          <DockHeader>
            <HeaderTitle>Items</HeaderTitle>
            <FloatIcon />
            <CloseIcon />
          </DockHeader>
          <ItemTree>
            <ItemList>
              <ItemHead>
                <HeadCell $pad={3}>
                  <svg width="18" height="12" viewBox="0 0 18 12"><path d="M1 6c4-6 12-6 16 0-4 6-12 6-16 0z" fill="#eee" stroke="#999" /><circle cx="9" cy="6" r="2.5" fill="#555" /></svg>
                </HeadCell>
                <HeadCell $pad={6}>
                  <svg width="14" height="17" viewBox="0 0 14 17"><path d="M3.5 8V5a3.5 3.5 0 0 1 7 0v3" fill="none" stroke="#999" strokeWidth="1.5" /><rect x="1" y="8" width="12" height="8.5" rx="1" fill="#666" /></svg>
                </HeadCell>
                <HeadCell $last $pad={4}>Item</HeadCell>
              </ItemHead>
              {ITEMS.map(name => (
                <ItemRow key={name}>
                  <CheckBox $left={2}><Check /></CheckBox>
                  <CheckBox $left={3} />
                  <ItemName>
                    <TypeIcon>T</TypeIcon>
                    {name}
                  </ItemName>
                </ItemRow>
              ))}
            </ItemList>
            <ScrollBar $w={17}>
              <ChevronUp size={14} strokeWidth={1.5} />
              <Thumb $top={19} $h={46} />
              <ChevronDown size={14} strokeWidth={1.5} />
            </ScrollBar>
          </ItemTree>
          <DockTabs $indent={153} $top={4}>
            <DockTab $w={57}>Guides</DockTab>
            <DockTab $w={49} $active>Atlas</DockTab>
          </DockTabs>
          <DockHeader $top={1}>
            <HeaderTitle />
            <FloatIcon />
            <CloseIcon />
          </DockHeader>
          <Strip />
          <AtlasBody>
            <GroupBox $h={152} $pad="16px 9px 0 10px">
              <FormRow $h={21}>
                <Combo $pad={127}>_transposed_for_atlas<Chev /></Combo>
              </FormRow>
              <FormRow $h={21} $top={29}>
                <Combo $white $pad={122}>d<Chev /></Combo>
                <EpsButton>ε</EpsButton>
              </FormRow>
              <FormRow $h={18} $top={9}>
                <DisabledInput />
                <EpsButton $off $h={19}>ε</EpsButton>
              </FormRow>
              <FormRow $h={21} $top={7}>
                <DisabledCombo><div /><Chev color="#bbb" /></DisabledCombo>
                <EpsButton $off>ε</EpsButton>
                <UpTriangle />
              </FormRow>
            </GroupBox>
            <GroupGap />
            <GroupBox $h={113} $pad="15px 9px 0 8px">
              <OutputTitle><Caret />Output</OutputTitle>
              <FieldLabel>Output filename expression</FieldLabel>
              <FormRow $h={19} $top={5}>
                <TextInput>'output_'||right(('00' ||   @atlas_featureid ),3)</TextInput>
                <EpsButton $h={19}>ε</EpsButton>
              </FormRow>
              <FormRow $h={15} $top={8} $gap={5}>
                <CheckBox />
                <FieldLabel>Single file export when possible</FieldLabel>
              </FormRow>
              <FormRow $h={18} $top={7}>
                <FieldLabel>Image export format</FieldLabel>
                <Combo>png<Chev /></Combo>
              </FormRow>
            </GroupBox>
          </AtlasBody>
        </Dock>
      </Main>

      <StatusBar>
        <StatusText $w={1139} $size={11.8}>Atlas feature 22 of 22</StatusText>
        <StatusText $w={89}>x: 280.731 mm</StatusText>
        <StatusText $w={88}>y: 66.9236 mm</StatusText>
        <StatusText $w={88}>page: 1</StatusText>
        <ZoomCombo>73.1%<Chev /></ZoomCombo>
        <SliderTrack><SliderHandle /></SliderTrack>
      </StatusBar>

      <Dialog>
        <DialogTitle>
          <QLogo size={17} />
          <span>Expression Based Filename</span>
          <DialogClose><X size={18} strokeWidth={1} /></DialogClose>
        </DialogTitle>
        <DialogTabs>
          <DialogTab $w={77} $active>Expression</DialogTab>
          <DialogTab $w={93}>Function Editor</DialogTab>
        </DialogTabs>
        <DialogBody>
          <EditorCol>
            <OpButtons>
              {OPS.map(o => <OpButton key={o}>{o}</OpButton>)}
            </OpButtons>
            <Editor>
              <CodeLine $size={12.85}><Str>'output_'</Str><Op>||</Op><Fn>right</Fn><Op>((</Op><Str>'00'</Str><Op> ||</Op>   @atlas_featureid <Op>),</Op><Num>3</Num><Op>)</Op></CodeLine>
              <CodeLine />
              <CodeLine $comment>--I've used this expression so that all output are called 'output_'</CodeLine>
              <CodeLine $comment>followed by three digits, padded with zeros. This was just for</CodeLine>
              <CodeLine $comment>convenience and experimental purposes but it's a useful trick if</CodeLine>
              <CodeLine $comment>you ever need a set of outputs padded with zeros.</CodeLine>
            </Editor>
            <Preview>Output preview:  'output_021'</Preview>
          </EditorCol>
          <MiddleCol>
            <SearchBox><Search size={13} strokeWidth={1.3} color="#777" />Search...</SearchBox>
            <FuncTree>
              <FuncList>
                {FUNCTIONS.map(f => (
                  <FuncRow key={f}><ChevronRight size={14} strokeWidth={1.5} /><span>{f}</span></FuncRow>
                ))}
              </FuncList>
              <ScrollBar $w={18}>
                <ChevronUp size={14} strokeWidth={1.5} />
                <Thumb $top={18} $h={159} />
                <ChevronDown size={14} strokeWidth={1.5} />
              </ScrollBar>
            </FuncTree>
          </MiddleCol>
          <HelpBox>
            <HelpHead>group aggregates</HelpHead>
            <HelpText>Contains functions which aggregate values over layers and fields.</HelpText>
          </HelpBox>
        </DialogBody>
        <DialogFooter>
          <DlgButton $w={75} $primary>OK</DlgButton>
          <DlgButton $w={76}>Cancel</DlgButton>
          <DlgButton $w={76}>Help</DlgButton>
        </DialogFooter>
      </Dialog>
    </Window>
  );
}
